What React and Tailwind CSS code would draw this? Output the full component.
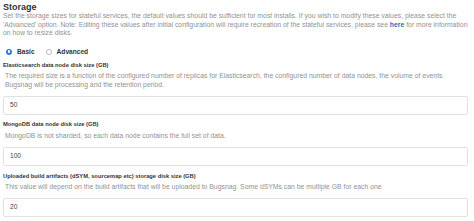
export default function App() {
  const fields = [
    {
      label: 'Elasticsearch data node disk size (GB)',
      desc: [
        'The required size is a function of the configured number of replicas for Elasticsearch, the configured number of data nodes, the volume of events',
        'Bugsnag will be processing and the retention period.',
      ],
      value: '50',
    },
    {
      label: 'MongoDB data node disk size (GB)',
      desc: ['MongoDB is not sharded, so each data node contains the full set of data.'],
      value: '100',
    },
    {
      label: 'Uploaded build artifacts (dSYM, sourcemap etc) storage disk size (GB)',
      desc: ['This value will depend on the build artifacts that will be uploaded to Bugsnag. Some dSYMs can be multiple GB for each one'],
      value: '20',
    },
  ];

  return (
    <div className="bg-white w-[474px] h-[221px] overflow-hidden pt-[2px] pl-[3px] pr-[6px] font-['Liberation_Sans',Arial,sans-serif]">
      <h2 className="text-[9px] leading-[10px] font-bold text-[#333]">Storage</h2>
      <div className="text-[6.85px] leading-[8.5px] text-[#929292] whitespace-nowrap">
        <div>
          Set the storage sizes for stateful services, the default values should be sufficient for most installs. If you
          wish to modify these values, please select the
        </div>
        <div>
          'Advanced' option. Note: Editing these values after initial configuration will require recreation of the
          stateful services, please see <a className="font-bold text-[#1f6fb8]">here</a> for more information
        </div>
        <div>on how to resize disks.</div>
      </div>

      {/* Basic / Advanced */}
      <div className="flex items-center h-[10px] mt-[9px] text-[6.6px] leading-[10px] text-[#333]">
        <span className="ml-[3px] w-[6px] h-[6px] rounded-full bg-[#2f7fd6] flex items-center justify-center">
          <span className="w-[2.5px] h-[2.5px] rounded-full bg-white" />
        </span>
        <span className="ml-[5px] font-semibold">Basic</span>
        <span className="ml-[11px] w-[6px] h-[6px] rounded-full border border-[#bbb] bg-white" />
        <span className="ml-[5px] font-semibold">Advanced</span>
      </div>

      {fields.map((f, i) => (
        <div key={i} className={i === 0 ? 'mt-[4px]' : i === 1 ? 'mt-[5px]' : 'mt-[6px]'}>
          <div className="text-[5.75px] leading-[8px] font-semibold text-[#333] whitespace-nowrap">{f.label}</div>
          <div
            className={`${i === 1 ? 'mt-[3px]' : 'mt-[2px]'} pl-[2px] text-[6.85px] leading-[9px] text-[#929292] whitespace-nowrap`}
          >
            {f.desc.map((line, j) => (
              <div key={j}>{line}</div>
            ))}
          </div>
          <div className="mt-[7px] h-[19px] border border-[#e2e2e2] rounded-[2px] flex items-center pl-[6px] text-[6.6px] text-[#444]">
            {f.value}
          </div>
        </div>
      ))}
    </div>
  );
}
